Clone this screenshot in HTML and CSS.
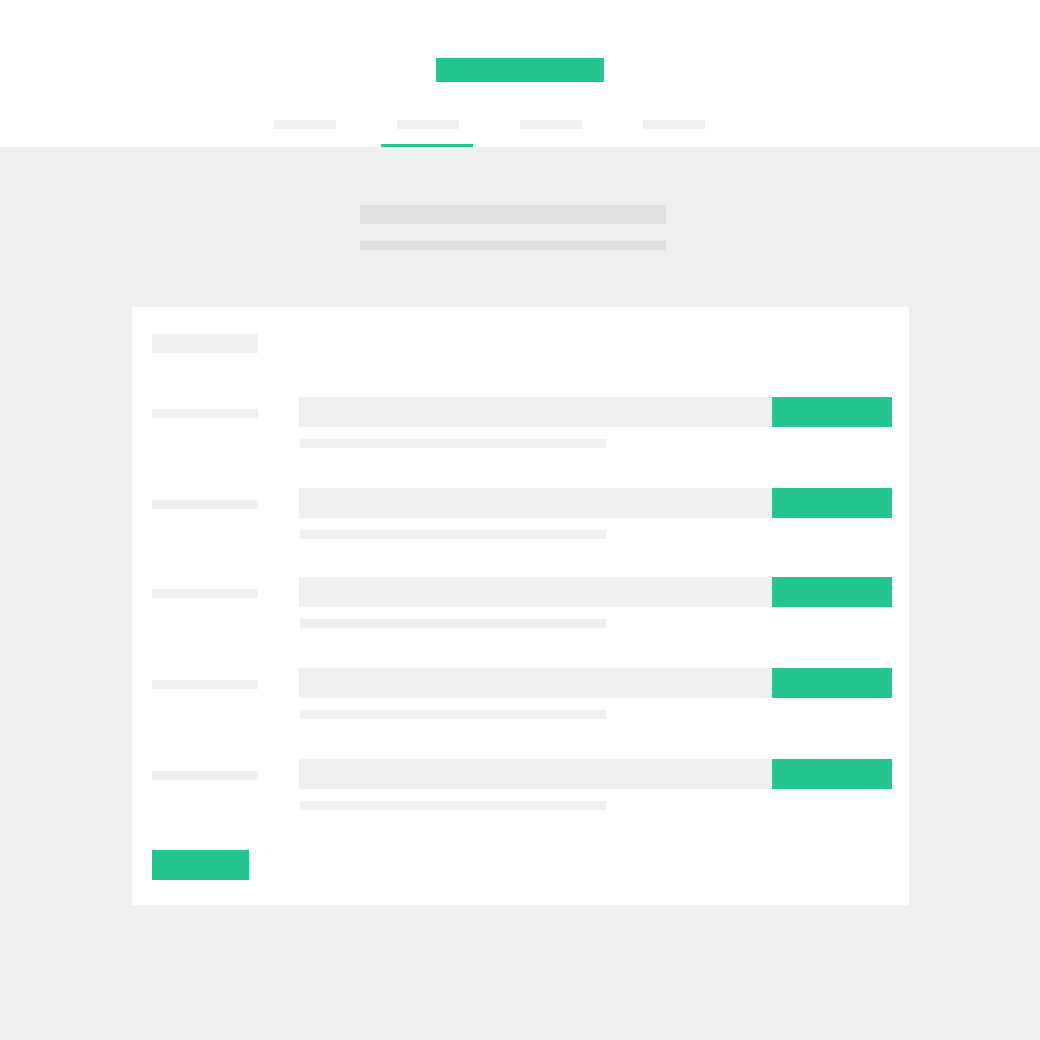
FILE: index.html
```html
<!DOCTYPE html>
<html lang="en">
<head>
<meta charset="utf-8">
<title>Settings</title>
<link rel="stylesheet" href="styles.css">
</head>
<body>
<header class="header">
  <div class="logo"></div>
  <nav class="nav">
    <div class="tab"><span class="tab-text"></span></div>
    <div class="tab tab--active"><span class="tab-text"></span></div>
    <div class="tab"><span class="tab-text"></span></div>
    <div class="tab"><span class="tab-text"></span></div>
  </nav>
</header>
<main class="main">
  <div class="page-title"></div>
  <div class="page-sub"></div>
  <section class="card">
    <div class="card-title"></div>
    <div class="rows">
      <div class="row">
        <div class="label-col"><span class="label"></span></div>
        <div class="field-col">
          <div class="field"><div class="input"></div><div class="btn"></div></div>
          <div class="hint"></div>
        </div>
      </div>
      <div class="row row--tight">
        <div class="label-col"><span class="label"></span></div>
        <div class="field-col">
          <div class="field"><div class="input"></div><div class="btn"></div></div>
          <div class="hint"></div>
        </div>
      </div>
      <div class="row">
        <div class="label-col"><span class="label"></span></div>
        <div class="field-col">
          <div class="field"><div class="input"></div><div class="btn"></div></div>
          <div class="hint"></div>
        </div>
      </div>
      <div class="row">
        <div class="label-col"><span class="label"></span></div>
        <div class="field-col">
          <div class="field"><div class="input"></div><div class="btn"></div></div>
          <div class="hint"></div>
        </div>
      </div>
      <div class="row">
        <div class="label-col"><span class="label"></span></div>
        <div class="field-col">
          <div class="field"><div class="input"></div><div class="btn"></div></div>
          <div class="hint"></div>
        </div>
      </div>
    </div>
    <div class="submit"></div>
  </section>
</main>
</body>
</html>
```

FILE: styles.css
```css
* { box-sizing: border-box; }
html, body {
  margin: 0;
  padding: 0;
  background: #efefef;
  font-family: "Liberation Sans", Arial, sans-serif;
}
body { min-height: 1040px; }

.header {
  background: #ffffff;
  height: 147px;
  padding-top: 58px;
}
.logo {
  width: 168px;
  height: 24px;
  margin: 0 auto;
  background: #23c591;
}
.nav {
  display: flex;
  gap: 31px;
  margin-top: 38px;
  padding-left: 258px;
}
.tab {
  width: 92px;
  height: 27px;
  padding-left: 16px;
  border-bottom: 3px solid transparent;
}
.tab--active { border-bottom-color: #23c591; }
.tab-text {
  display: block;
  width: 62px;
  height: 9px;
  background: #efefef;
}

.main {
  padding-top: 58px;
  padding-bottom: 135px;
}
.page-title {
  width: 306px;
  height: 19px;
  margin-left: 360px;
  background: #e0e0e0;
}
.page-sub {
  width: 306px;
  height: 9px;
  margin-top: 17px;
  margin-left: 360px;
  background: #e0e0e0;
}

.card {
  width: 777px;
  margin-top: 57px;
  margin-left: 132px;
  background: #ffffff;
  padding: 27px 17px 25px 20px;
}
.card-title {
  width: 106px;
  height: 19px;
  background: #efefef;
}
.rows {
  display: flex;
  flex-direction: column;
  margin-top: 44px;
}
.row {
  display: flex;
  margin-bottom: 40px;
}
.row--tight { margin-bottom: 38px; }
.label-col {
  width: 147px;
  flex: none;
  padding-top: 12px;
}
.label {
  display: block;
  width: 106px;
  height: 9px;
  background: #efefef;
}
.field-col { flex: 1; }
.field {
  display: flex;
  height: 30px;
}
.input {
  flex: 1;
  background: #efefef;
}
.btn {
  width: 120px;
  background: #23c591;
}
.hint {
  width: 306px;
  height: 9px;
  margin-top: 12px;
  margin-left: 1px;
  background: #efefef;
}
.submit {
  width: 97px;
  height: 30px;
  background: #23c591;
}
```
